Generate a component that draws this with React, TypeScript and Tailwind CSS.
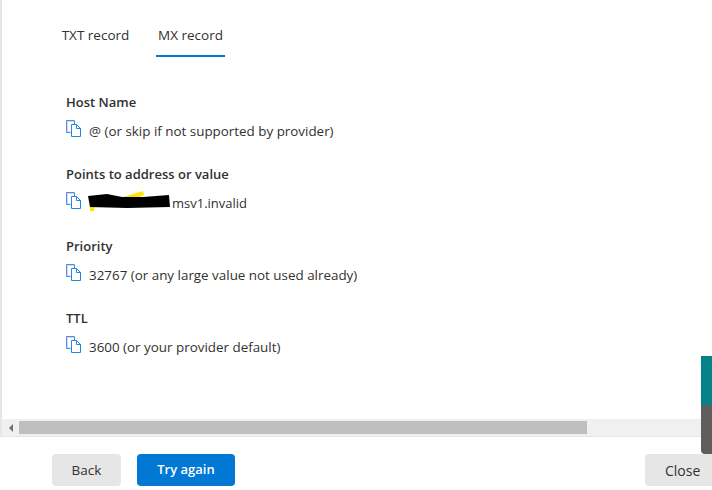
import type { ReactNode } from "react";

const records = [
  { label: "Host Name", value: "@ (or skip if not supported by provider)" },
  { label: "Points to address or value", value: "msv1.invalid", redacted: true },
  { label: "Priority", value: "32767 (or any large value not used already)" },
  { label: "TTL", value: "3600 (or your provider default)" },
];

function CopyIcon() {
  return (
    <svg width="16" height="18" viewBox="0 0 16 18" fill="none" className="mt-px shrink-0">
      <path d="M4.5 12.5H0.5V0.5H8.5V4" stroke="#3b95e6" strokeWidth="1" />
      <path d="M4.5 11.5H1.5V1.5H8" stroke="#f0cdf0" strokeWidth="1" />
      <path d="M5.5 4.5H10.5L14.5 8.5V16.5H5.5V4.5Z" fill="#fff" stroke="#1e88e5" strokeWidth="1" />
      <path d="M10.5 4.5V8.5H14.5" stroke="#1e88e5" strokeWidth="1" />
    </svg>
  );
}

function Scribble() {
  return (
    <svg width="84" height="22" viewBox="0 0 84 22" className="absolute top-[-1px] left-[-2px]">
      <path d="M33 8L56 1L57 5L45 10Z" fill="#ffe600" />
      <path d="M3 16L8 16L7 21L3 21Z" fill="#ffe600" />
      <path d="M1 6L20 4L35 7L56 7L82 5L83 17L40 18L3 17Z" fill="#000" />
    </svg>
  );
}

function Button({ className, children }: { className: string; children: ReactNode }) {
  return <button className={`h-8 rounded-sm ${className}`}>{children}</button>;
}

export default function App() {
  return (
    <div className="relative flex h-[490px] w-[712px] flex-col overflow-hidden bg-white font-['Open_Sans','Noto_Sans',sans-serif] text-[#323130]">
      <div className="flex h-[437px] flex-col border-b border-l-2 border-[#e6e6e6]">
        <div className="flex-1 pl-[58px]">
          <div className="flex gap-[26px] pt-3.5">
            <div className="ml-px flex h-[43px] w-[69px] items-center justify-center text-[13.5px]">TXT record</div>
            <div className="flex h-[43px] w-[69px] items-center justify-center border-b-2 border-[#0078d4] pt-[2px] text-[13.5px] font-medium">
              MX record
            </div>
          </div>

          <div className="flex flex-col gap-[28px] pt-[37px] pl-[6px]">
            {records.map((r) => (
              <div key={r.label} className="flex flex-col gap-[9px]">
                <div className="h-[16px] text-[13px] leading-[16px] font-semibold">{r.label}</div>
                <div className="flex h-[19px] items-start gap-[7px] text-[13.4px] leading-[19px]">
                  <CopyIcon />
                  {r.redacted ? (
                    <span className="relative pt-[3px] pl-[83px] text-[13px]">
                      <Scribble />
                      {r.value}
                    </span>
                  ) : (
                    <span className="pt-[3px]">{r.value}</span>
                  )}
                </div>
              </div>
            ))}
          </div>
        </div>

        {/* horizontal scrollbar */}
        <div className="flex h-[17px] items-center bg-[#f0f0f0]">
          <div className="flex w-[17px] justify-center">
            <div className="h-0 w-0 border-y-[4px] border-r-[4px] border-y-transparent border-r-[#707070]" />
          </div>
          <div className="h-[13px] w-[568px] bg-[#bfbfbf]" />
        </div>
      </div>

      <div className="flex flex-1 items-start pt-[17px] pl-[52px]">
        <Button className="w-[69px] bg-[#e6e6e6] text-[13.5px]">Back</Button>
        <Button className="ml-4 w-[98px] bg-[#0078d4] text-[13px] font-semibold text-white">Try again</Button>
        <Button className="ml-auto w-[67px] rounded-r-none bg-[#e6e6e6] pl-[20px] text-left text-[14px]">Close</Button>
      </div>

      {/* feedback tabs pinned to the window edge */}
      <div className="absolute top-[356px] right-0 h-[49px] w-[11px] bg-[#038387]" />
      <div className="absolute top-[405px] right-0 h-[49px] w-[11px] rounded-bl-sm bg-[#605e5c]" />
    </div>
  );
}
